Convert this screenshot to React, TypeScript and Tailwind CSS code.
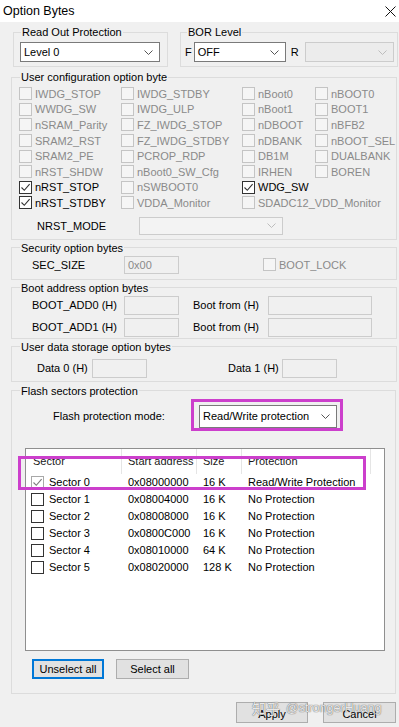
import React from "react";

const FONT = "font-['Liberation_Sans',Arial,sans-serif]";

function Check({ on = false, off = false, dim = false }: { on?: boolean; off?: boolean; dim?: boolean }) {
  const box = off
    ? "border-[#c4c4c4] bg-[#f5f5f5]"
    : dim
    ? "border-[#a8a8a8] bg-white"
    : "border-[#333333] bg-white";
  return (
    <span className={`flex h-[13px] w-[13px] shrink-0 items-center justify-center border ${box}`}>
      {on && (
        <svg width="11" height="11" viewBox="0 0 11 11">
          <path d="M1.5 5.5 L4.3 8.3 L9.6 2.2" fill="none" stroke={dim ? "#7a7a7a" : "#333"} strokeWidth="1.1" />
        </svg>
      )}
    </span>
  );
}

function Chevron({ off = false }: { off?: boolean }) {
  return (
    <svg width="9" height="5" viewBox="0 0 9 5" className="shrink-0">
      <path d="M0.5 0.5 L4.5 4.5 L8.5 0.5" fill="none" stroke={off ? "#bdbdbd" : "#555"} strokeWidth="1" />
    </svg>
  );
}

function Select({ value, off = false, className = "" }: { value?: string; off?: boolean; className?: string }) {
  return (
    <div
      className={`flex items-center justify-between border pl-[3px] pr-[6px] ${
        off ? "border-[#cccccc] bg-[#ececec]" : "border-[#7a7a7a] bg-white"
      } ${className}`}
    >
      <span>{value}</span>
      <Chevron off={off} />
    </div>
  );
}

function Input({ value, className = "" }: { value?: string; className?: string }) {
  return (
    <div className={`flex items-center border border-[#cccccc] bg-[#f0f0f0] pl-[3px] text-[#8a8a8a] ${className}`}>
      {value}
    </div>
  );
}

const cols: (string | null)[][] = [
  ["IWDG_STOP", "WWDG_SW", "nSRAM_Parity", "SRAM2_RST", "SRAM2_PE", "nRST_SHDW", "nRST_STOP", "nRST_STDBY"],
  ["IWDG_STDBY", "IWDG_ULP", "FZ_IWDG_STOP", "FZ_IWDG_STDBY", "PCROP_RDP", "nBoot0_SW_Cfg", "nSWBOOT0", "VDDA_Monitor"],
  ["nBoot0", "nBoot1", "nDBOOT", "nDBANK", "DB1M", "IRHEN", "WDG_SW", "SDADC12_VDD_Monitor"],
  ["nBOOT0", "BOOT1", "nBFB2", "nBOOT_SEL", "DUALBANK", "BOREN", null, null],
];

const enabled = ["nRST_STOP", "nRST_STDBY", "WDG_SW"];

const sectors = [
  { name: "Sector 0", addr: "0x08000000", size: "16 K", prot: "Read/Write Protection", on: true },
  { name: "Sector 1", addr: "0x08004000", size: "16 K", prot: "No Protection", on: false },
  { name: "Sector 2", addr: "0x08008000", size: "16 K", prot: "No Protection", on: false },
  { name: "Sector 3", addr: "0x0800C000", size: "16 K", prot: "No Protection", on: false },
  { name: "Sector 4", addr: "0x08010000", size: "64 K", prot: "No Protection", on: false },
  { name: "Sector 5", addr: "0x08020000", size: "128 K", prot: "No Protection", on: false },
];

export default function App() {
  return (
    <div className={`relative h-[727px] w-[399px] overflow-hidden bg-[#f0f0f0] ${FONT} text-[11px] leading-[14px] text-black`}>
      {/* title bar */}
      <div className="flex h-[22px] items-center justify-between bg-white pl-[3px] pr-[3px]">
        <span className="text-[12.5px]">Option Bytes</span>
        <svg width="11" height="11" viewBox="0 0 11 11">
          <path d="M0.5 0.5 L10.5 10.5 M10.5 0.5 L0.5 10.5" stroke="#111" strokeWidth="1" />
        </svg>
      </div>

      {/* read out + BOR */}
      <div className="ml-[13px] mt-[3px] flex gap-[12px]">
        <fieldset className="w-[155px] border border-[#dcdcdc] pb-[4px]">
          <legend className="ml-[7px] px-[1px]">Read Out Protection</legend>
          <Select value="Level 0" className="ml-[6px] mt-[3px] h-[20px] w-[140px]" />
        </fieldset>
        <fieldset className="w-[218px] border border-[#dcdcdc] pb-[4px]">
          <legend className="ml-[6px] px-[1px]">BOR Level</legend>
          <div className="mt-[3px] flex items-center pl-[4px]">
            <span>F</span>
            <Select value="OFF" className="ml-[2px] h-[20px] w-[92px]" />
            <span className="ml-[5px]">R</span>
            <Select off className="ml-[6px] h-[20px] w-[89px]" />
          </div>
        </fieldset>
      </div>

      {/* user configuration */}
      <fieldset className="ml-[11px] mt-[3px] w-[386px] border border-[#dcdcdc] pb-[4px]">
        <legend className="ml-[8px] px-[1px]">User configuration option byte</legend>
        <div className="mt-[2px] grid auto-rows-[15.6px] grid-cols-[102px_121px_73px_1fr] pl-[7px]">
          {Array.from({ length: 8 }).map((_, r) =>
            cols.map((c, ci) => {
              const label = c[r];
              if (!label) return <div key={`${r}-${ci}`} />;
              const en = enabled.includes(label);
              return (
                <div key={`${r}-${ci}`} className="flex items-center gap-[3px] whitespace-nowrap">
                  <Check on={en} off={!en} />
                  <span className={en ? "text-black" : "text-[#8a8a8a]"}>{label}</span>
                </div>
              );
            })
          )}
        </div>
        <div className="mt-[6px] flex items-center pl-[25px]">
          <span className="w-[102px]">NRST_MODE</span>
          <Select off className="h-[18px] w-[144px] !bg-[#f3f3f3]" />
        </div>
      </fieldset>

      {/* security */}
      <fieldset className="ml-[11px] mt-[1px] w-[386px] border border-[#dcdcdc] pb-[5px]">
        <legend className="ml-[8px] px-[1px]">Security option bytes</legend>
        <div className="mt-[1px] flex items-center pl-[20px]">
          <span className="w-[92px]">SEC_SIZE</span>
          <Input value="0x00" className="h-[18px] w-[55px]" />
          <div className="ml-[84px] flex items-center gap-[3px]">
            <Check off />
            <span className="text-[#8a8a8a]">BOOT_LOCK</span>
          </div>
        </div>
      </fieldset>

      {/* boot address */}
      <fieldset className="ml-[11px] mt-[1px] w-[386px] border border-[#dcdcdc] pb-[1px]">
        <legend className="ml-[8px] px-[1px]">Boot address option bytes</legend>
        <div className="mt-[1px] flex flex-col gap-[3px]">
          {["BOOT_ADD0 (H)", "BOOT_ADD1 (H)"].map((t) => (
            <div key={t} className="flex items-center pl-[20px]">
              <span className="w-[92px]">{t}</span>
              <Input className="h-[19px] w-[55px]" />
              <span className="ml-[14px] w-[75px]">Boot from (H)</span>
              <Input className="h-[19px] w-[104px]" />
            </div>
          ))}
        </div>
      </fieldset>

      {/* user data */}
      <fieldset className="ml-[11px] mt-[1px] w-[386px] border border-[#dcdcdc] pb-[3px]">
        <legend className="ml-[8px] px-[1px]">User data storage option bytes</legend>
        <div className="mt-[5px] flex items-center pl-[25px]">
          <span className="w-[55px]">Data 0 (H)</span>
          <Input className="h-[19px] w-[55px]" />
          <span className="ml-[81px] w-[54px]">Data 1 (H)</span>
          <Input className="h-[19px] w-[55px]" />
        </div>
      </fieldset>

      {/* flash sectors */}
      <fieldset className="ml-[11px] mt-[2px] w-[385px] border border-[#dcdcdc] pb-[14px]">
        <legend className="ml-[8px] px-[1px]">Flash sectors protection</legend>
        <div className="mt-[1px] flex items-center pl-[41px]">
          <span className="w-[138px] pt-[2px]">Flash protection mode:</span>
          <div className="h-[32px] w-[152px] border-[3px] border-[#cc3fcc] pl-[5px] pt-[3px]">
            <Select value="Read/Write protection" className="h-[23px] w-[138px]" />
          </div>
        </div>

        <div className="ml-[13px] mt-[17px] h-[203px] w-[360px] border border-[#8f8f8f] bg-white">
          <div className="grid h-[25px] grid-cols-[96px_75px_45px_129px_1fr] text-[#1a1a1a]">
            <div className="flex items-center border-r border-[#e5e5e5] pl-[7px]">Sector</div>
            <div className="flex items-center border-r border-[#e5e5e5] pl-[6px]">Start address</div>
            <div className="flex items-center border-r border-[#e5e5e5] pl-[6px]">Size</div>
            <div className="flex items-center border-r border-[#e5e5e5] pl-[6px]">Protection</div>
            <div />
          </div>
          {sectors.map((s) => (
            <div key={s.name} className="grid h-[17px] grid-cols-[96px_75px_45px_129px_1fr] items-center whitespace-nowrap">
              <div className="flex items-center gap-[5px] pl-[5px]">
                <Check on={s.on} dim={s.on} />
                <span>{s.name}</span>
              </div>
              <span className="pl-[6px]">{s.addr}</span>
              <span className="pl-[6px]">{s.size}</span>
              <span className="pl-[6px]">{s.prot}</span>
              <span />
            </div>
          ))}
        </div>

        <div className="ml-[20px] mt-[8px] flex gap-[12px]">
          <button className="h-[20px] w-[72px] border-2 border-[#0078d7] bg-[#e1e1e1]">Unselect all</button>
          <button className="h-[20px] w-[73px] border border-[#adadad] bg-[#e1e1e1]">Select all</button>
        </div>
      </fieldset>

      {/* footer */}
      <div className="mt-[8px] flex justify-end gap-[15px] pr-[3px]">
        <button className="h-[21px] w-[72px] border border-[#adadad] bg-[#e1e1e1] pt-[3px]">Apply</button>
        <button className="h-[21px] w-[73px] border border-[#adadad] bg-[#e1e1e1] pt-[3px]">Cancel</button>
      </div>

      {/* annotation box over table rows */}
      <div className="absolute left-[18px] top-[456px] h-[34px] w-[348px] border-[3px] border-[#cc3fcc]" />

      {/* watermark */}
      <div className="absolute left-[252px] top-[700px] flex items-center gap-[6px] whitespace-nowrap leading-[16px] text-[rgba(255,255,255,0.85)] [text-shadow:0_0_1px_#6f6f6f,0_0_1px_#6f6f6f]">
        <span className="font-['Noto_Sans_CJK_SC',sans-serif] text-[14px]">知乎</span>
        <span className="font-['Liberation_Sans',Arial,sans-serif] text-[12.5px]">@strongerHuang</span>
      </div>
    </div>
  );
}
